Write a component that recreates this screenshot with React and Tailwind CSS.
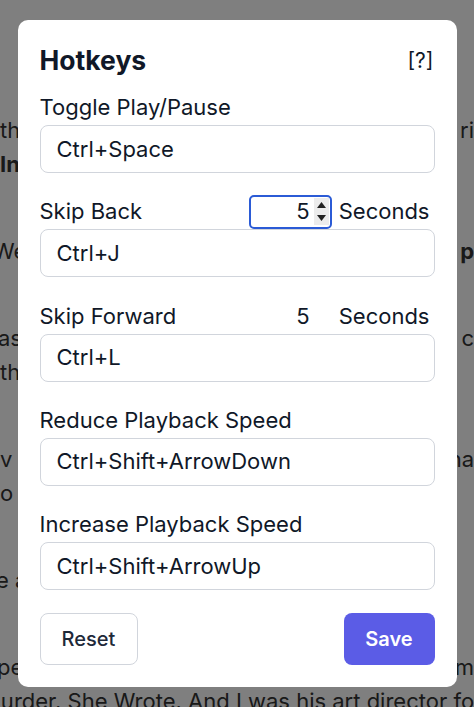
import { useState } from 'react';

const font = { fontFamily: 'Inter, "Noto Sans", sans-serif' };

// text of the article behind the dialog, one entry per line: [left, right, left offset]
const paragraphs = [
  [
    ['tha', 'ri', 0],
    [<b key="b">In</b>, '', 0],
  ],
  [['We', <span key="p">n <b>p</b></span>, -7]],
  [
    ['as', 'c', -2],
    ['th', '', 0],
  ],
  [
    [' v', 'ha', 0],
    ['o', '', 0],
  ],
  [['e a', '', -4]],
  [['pe', 'm', -3]],
];

function SecondsInput({ value, focused }) {
  return (
    <div
      className={
        focused
          ? 'w-[83px] h-[34px] rounded-[5px] border-2 border-[#2b5bd6] flex items-center justify-end pr-[1px]'
          : 'w-[83px] h-[34px] rounded-[5px] border-2 border-transparent flex items-center justify-end pr-[1px]'
      }
    >
      <span className="mr-[4px]">{value}</span>
      {focused ? (
        <div className="w-[15px] h-[27px] bg-[#ececec] flex flex-col items-center justify-center gap-[7px]">
          <svg width="9" height="6" viewBox="0 0 9 6">
            <path d="M4.5 0 L9 6 L0 6 Z" fill="#222" />
          </svg>
          <svg width="9" height="6" viewBox="0 0 9 6">
            <path d="M0 0 L9 0 L4.5 6 Z" fill="#222" />
          </svg>
        </div>
      ) : (
        <div className="w-[15px]" />
      )}
    </div>
  );
}

function HotkeyField({ label, value, seconds, focused }) {
  return (
    <div>
      <div className="h-[35px] flex items-center justify-between">
        <span>{label}</span>
        {seconds && (
          <div className="flex items-center gap-[7px] pr-[5px]">
            <SecondsInput value={seconds} focused={focused} />
            <span>Seconds</span>
          </div>
        )}
      </div>
      <div className="h-12 rounded-lg border border-gray-300 px-4 flex items-center text-gray-900">
        {value}
      </div>
    </div>
  );
}

export default function App() {
  const [keys] = useState([
    { label: 'Toggle Play/Pause', value: 'Ctrl+Space' },
    { label: 'Skip Back', value: 'Ctrl+J', seconds: 5, focused: true },
    { label: 'Skip Forward', value: 'Ctrl+L', seconds: 5 },
    { label: 'Reduce Playback Speed', value: 'Ctrl+Shift+ArrowDown' },
    { label: 'Increase Playback Speed', value: 'Ctrl+Shift+ArrowUp' },
  ]);

  return (
    <div style={font} className="relative h-[707px] w-[474px] overflow-hidden bg-white text-[#333]">
      {/* article underneath */}
      <div className="pt-[113px] text-[22px] leading-[34px] flex flex-col gap-[53px]">
        {paragraphs.map((lines, i) => (
          <div key={i}>
            {lines.map(([left, right, offset], j) => (
              <div key={j} className="flex justify-between whitespace-nowrap">
                <span style={{ marginLeft: offset }}>{left}</span>
                <span>{right}</span>
              </div>
            ))}
          </div>
        ))}
        <div className="-mt-[53px] whitespace-nowrap -ml-[19px]">
          Murder. She Wrote. And I was his art director fo
        </div>
      </div>

      {/* dialog */}
      <div className="fixed inset-0 bg-black/50 flex items-center justify-center">
        <div className="w-[439px] rounded-[10px] bg-white px-[22px] pt-[22px] pb-[22px] text-[22px] text-gray-900">
          <div className="h-[38px] mb-[10px] flex items-center justify-between">
            <h2 className="text-[26.5px] font-bold">Hotkeys</h2>
            <span className="pr-[1px] text-[21px]">[?]</span>
          </div>

          <div className="flex flex-col gap-[21.25px]">
            {keys.map((k) => (
              <HotkeyField key={k.label} {...k} />
            ))}
          </div>

          <div className="mt-[23px] flex justify-between text-[20px]">
            <button className="h-[52px] w-[98px] rounded-lg border border-gray-300 font-medium text-gray-800">
              Reset
            </button>
            <button className="h-[52px] w-[91px] rounded-lg bg-[#5b5ce6] font-semibold text-white">
              Save
            </button>
          </div>
        </div>
      </div>
    </div>
  );
}
